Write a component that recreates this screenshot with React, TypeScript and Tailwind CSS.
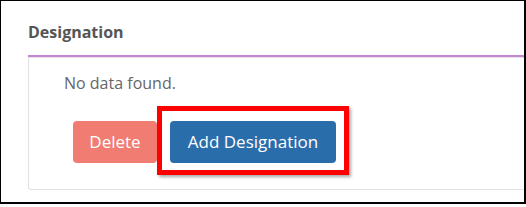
export default function App() {
  return (
    <div className="h-[207px] w-[526px] bg-white font-['Open_Sans',sans-serif]">
      <div className="h-[204px] border-t border-r-2 border-b-2 border-l border-black pt-[20px] pl-[27px]">
        <h2 className="text-[16px] leading-[22px] font-bold text-[#555555]">Designation</h2>
        <div className="mt-[12px] h-[2px] bg-[#c387d6]" />
        <div className="rounded-bl-[3px] border-t border-b border-l border-[#e2e2e2] pt-[14px] pb-[14px] pl-[35px]">
          <p className="text-[16px] leading-[22px] text-[#666666]">No data found.</p>
          <div className="mt-[12px] ml-[9px] flex items-start">
            <button className="mt-[15px] h-[42px] w-[84px] rounded-[4px] bg-[#f07c72] text-[17px] text-white">
              Delete
            </button>
            <div className="border-[5px] border-[#ff0000] px-[8px] pt-[10px] pb-[7px] shadow-[2px_2px_3px_rgba(0,0,0,0.35)]">
              <button className="h-[42px] w-[166px] rounded-[4px] bg-[#2a6dab] text-[17px] text-white">
                Add Designation
              </button>
            </div>
          </div>
        </div>
      </div>
    </div>
  );
}
